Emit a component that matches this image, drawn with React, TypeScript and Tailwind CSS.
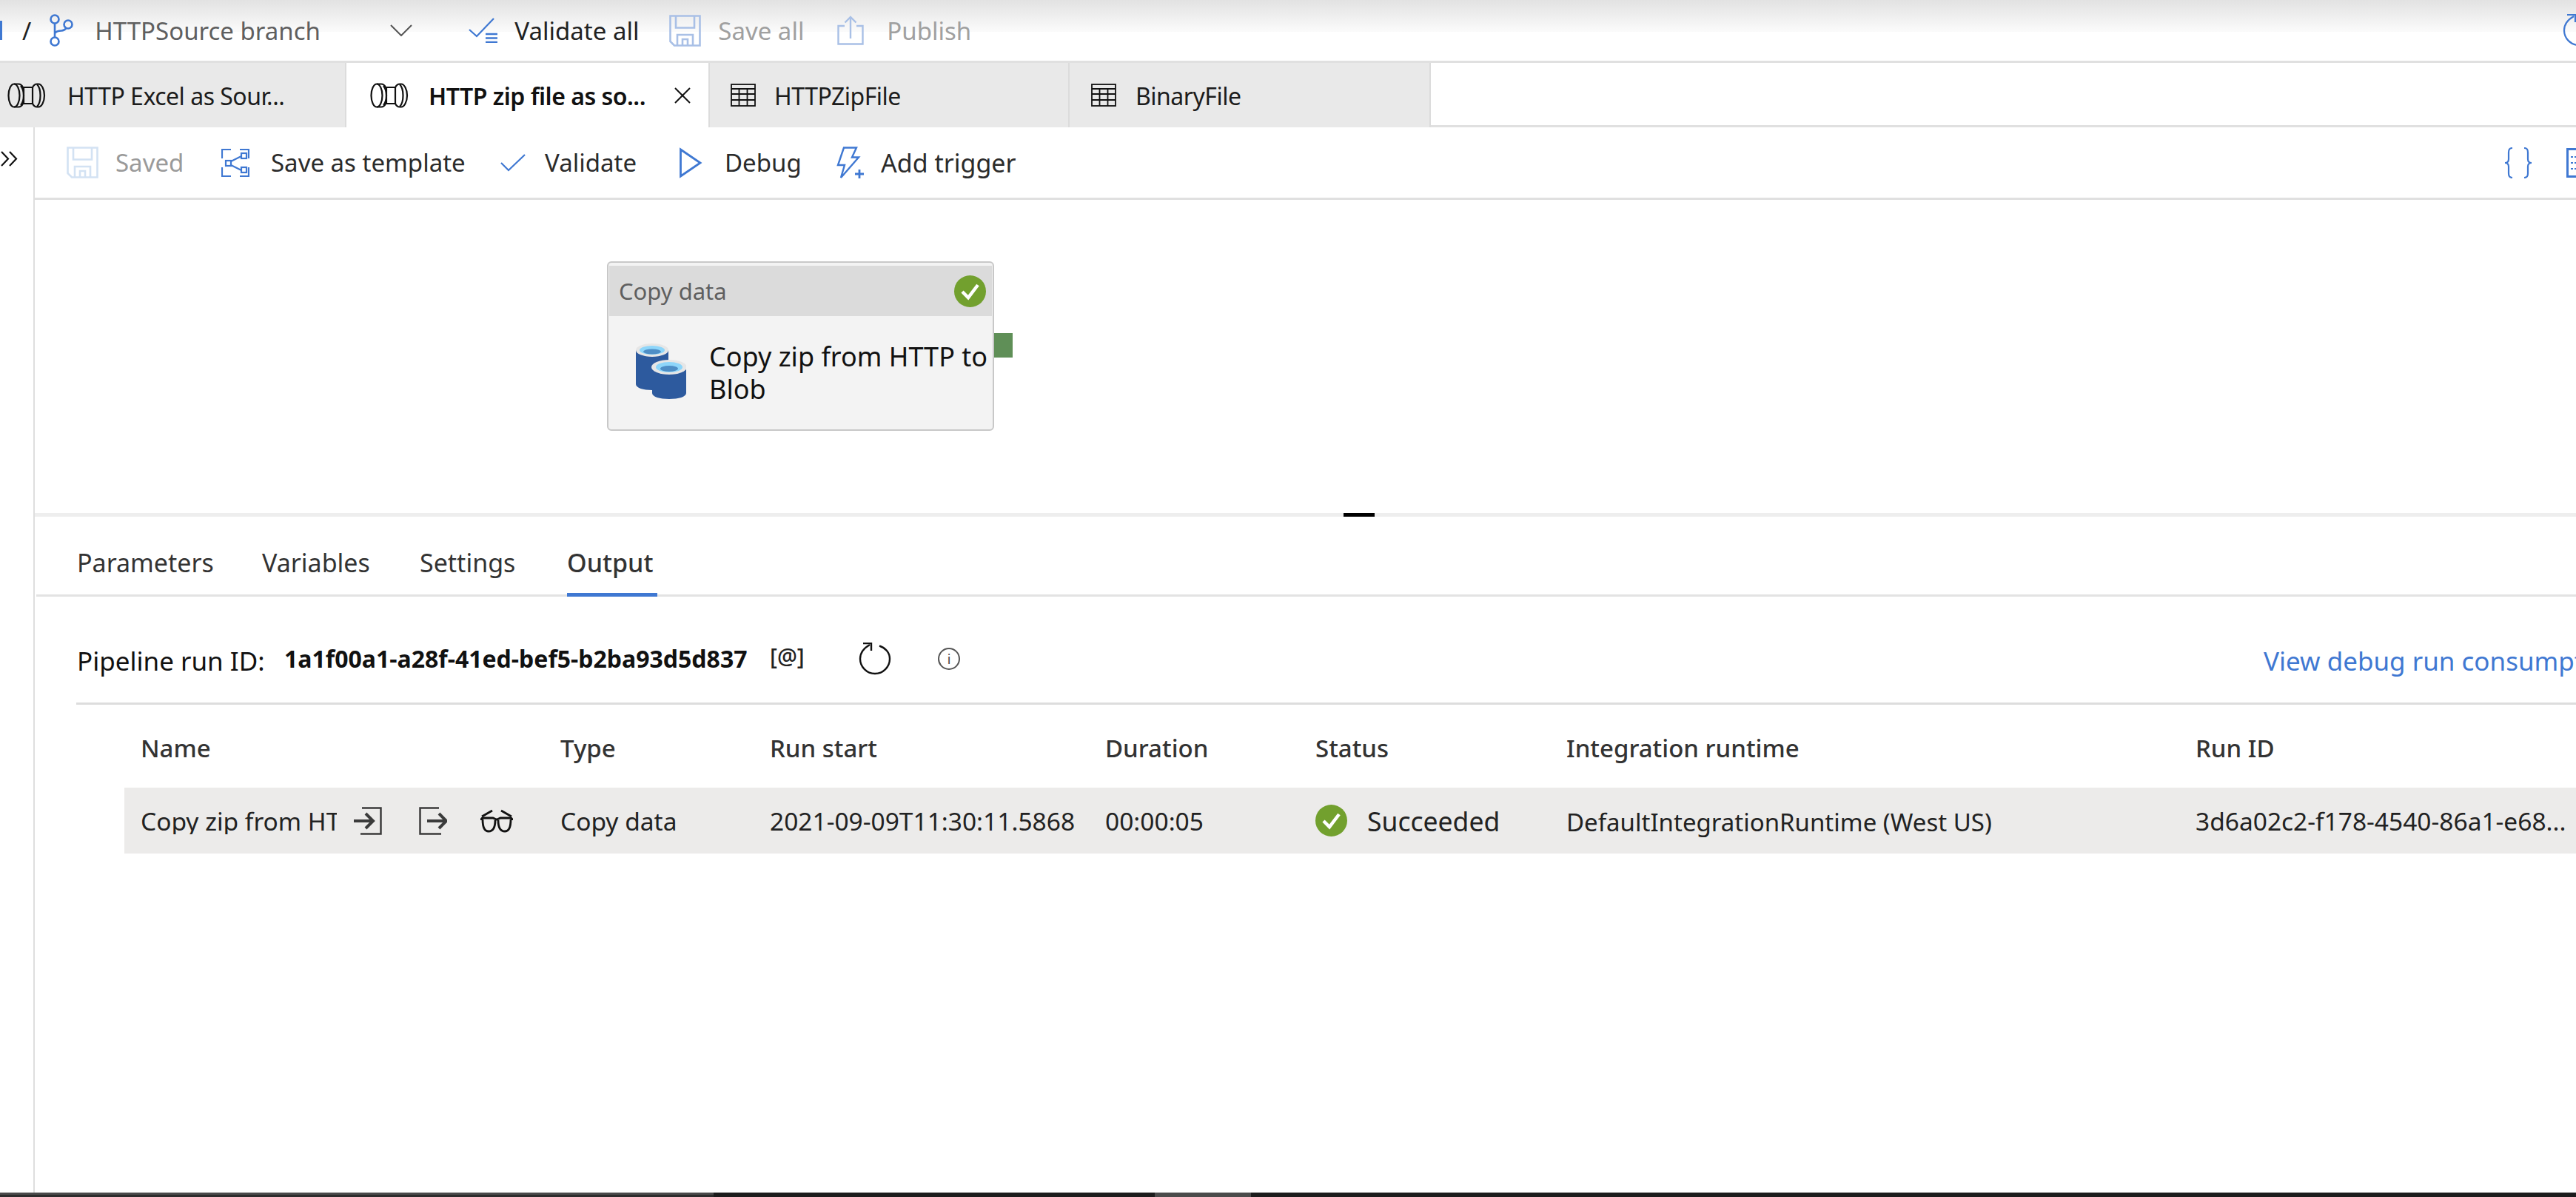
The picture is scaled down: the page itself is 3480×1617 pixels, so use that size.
import React from 'react';

const BLUE = '#3f78d2';

// --- ICONS ---
const BranchIcon = () => (
  <svg width="33" height="44" viewBox="0 0 33 44" fill="none" stroke={BLUE} strokeWidth="2.6" className="shrink-0">
    <circle cx="8" cy="7" r="5.5" /><circle cx="8" cy="37" r="5.5" /><circle cx="26" cy="14" r="5.5" />
    <path d="M8 12.5v19M8 26c2-3 5-3.500 9-3.500 3 0 5-1.500 6.500-3.500" />
  </svg>
);

const CheckListIcon = () => (
  <svg width="39" height="34" viewBox="0 0 39 34" fill="none" stroke={BLUE} className="shrink-0">
    <path d="M1 16l10 9L34 1" strokeWidth="2.2" />
    <path d="M23 22h16M23 27.500h16M23 33h16" strokeWidth="2.4" />
  </svg>
);

const SaveIcon = ({ color }: { color: string }) => (
  <svg width="43" height="43" viewBox="0 0 43 43" fill="none" stroke={color} strokeWidth="2.600" className="shrink-0">
    <path d="M1.500 1.500h40v40H7l-5.500-5.500z" />
    <path d="M9 1.500v16h25v-16M11 41.500V27h21v14.500M18 41.500V33h7v8.500" />
  </svg>
);

const PublishIcon = () => (
  <svg width="36" height="40" viewBox="0 0 36 40" fill="none" stroke="#a9c0e6" strokeWidth="2.400" className="shrink-0">
    <path d="M10 14H1.500v24.500h33V14H26M18 31V2M10.500 9.500L18 2l7.500 7.500" />
  </svg>
);

const PipelineIcon = () => (
  <svg width="52" height="34" viewBox="0 0 52 34" fill="none" stroke="#111" strokeWidth="2.200" className="shrink-0">
    <ellipse cx="9" cy="17" rx="7.500" ry="15.500" />
    <path d="M9 1.500h6c3 0 5 2.500 6 4.500h13c1-2 2.500-4.500 6-4.500h2c4 0 8 7 8 15.500s-4 15.500-8 15.500h-2c-3.500 0-5-2.500-6-4.500H21c-1 2-3 4.500-6 4.500H9" />
    <path d="M18 4c2.500 3 4 8 4 13s-1.500 10-4 13M40 2c3 3 4.500 9 4.500 15S43 29 40 32" />
    <path d="M22 6v22M34 6v22" />
  </svg>
);

const TableIcon = () => (
  <svg width="34" height="31" viewBox="0 0 34 31" fill="none" stroke="#111" strokeWidth="1.800" className="shrink-0">
    <rect x="1" y="1" width="32" height="29" />
    <path d="M1 7h32M1 14h32M1 22h32M11.500 7v23M22.500 7v23" />
  </svg>
);

const TemplateIcon = () => (
  <svg width="38" height="38" viewBox="0 0 38 38" fill="none" stroke={BLUE} strokeWidth="2.200" className="shrink-0">
    <path d="M13 1H1v12M25 1h12v12M13 37H1V25M25 37h12V25" />
    <rect x="6" y="16" width="7" height="7" /><rect x="27" y="6" width="7" height="7" /><rect x="27" y="25" width="7" height="7" />
    <path d="M13 17l14-7M13 22l14 7" />
  </svg>
);

const PlayIcon = () => (
  <svg width="31" height="42" viewBox="0 0 31 42" fill="none" stroke={BLUE} strokeWidth="2.800" className="shrink-0">
    <path d="M1.500 3v36L28 21z" />
  </svg>
);

const BoltIcon = () => (
  <svg width="38" height="44" viewBox="0 0 38 44" fill="none" stroke={BLUE} strokeWidth="2.400" className="shrink-0">
    <path d="M10 1.500h17l-6 13h9L6 42l5-17H2z" />
    <path d="M31 31v12M25 37h12" strokeWidth="2.800" />
  </svg>
);

const BracesIcon = () => (
  <svg width="38" height="42" viewBox="0 0 38 42" fill="none" stroke={BLUE} strokeWidth="2.200" className="shrink-0">
    <path d="M11 1C7 1 6 3 6 7v9c0 3-1.500 5-5 5 3.500 0 5 2 5 5v9c0 4 1 6 5 6" />
    <path d="M27 1c4 0 5 2 5 6v9c0 3 1.500 5 5 5-3.500 0-5 2-5 5v9c0 4-1 6-5 6" />
  </svg>
);

const DbIcon = () => (
  <svg width="68" height="76" viewBox="0 0 68 76" className="shrink-0">
    <path d="M0 9v46c0 5 10 8 22 8s22-3 22-8V9z" fill="#2d5a9e" />
    <ellipse cx="22" cy="9" rx="22" ry="9" fill="#e6e6e6" />
    <ellipse cx="22" cy="9" rx="17" ry="6" fill="#8ed6fa" />
    <ellipse cx="22" cy="11" rx="12" ry="3.500" fill="#4e8ec6" />
    <path d="M22 33v34c0 5 10 8 23 8s23-3 23-8V33z" fill="#2d5a9e" />
    <ellipse cx="45" cy="32" rx="24" ry="10" fill="#e6e6e6" />
    <ellipse cx="45" cy="32" rx="18" ry="7" fill="#8ed6fa" />
    <ellipse cx="45" cy="34" rx="12" ry="4" fill="#4e8ec6" />
  </svg>
);

const SuccessIcon = () => (
  <svg width="43" height="43" viewBox="0 0 43 43" className="shrink-0">
    <circle cx="21.500" cy="21.500" r="21.500" fill="#72a02e" />
    <path d="M11 22l8 8L32 13" fill="none" stroke="#fff" strokeWidth="4.500" />
  </svg>
);

const InputIcon = () => (
  <svg width="38" height="38" viewBox="0 0 38 38" fill="none" stroke="#3b3b3b" className="shrink-0">
    <path d="M11 1.500h25.500v35H9" strokeWidth="2.500" />
    <path d="M0 19h25M16 9l10 10-10 10" strokeWidth="4" />
  </svg>
);

const OutputIcon = () => (
  <svg width="38" height="38" viewBox="0 0 38 38" fill="none" stroke="#3b3b3b" className="shrink-0">
    <path d="M27 1.500H1.500v35H30" strokeWidth="2.500" />
    <path d="M11 19h25M27 9l10 10-10 10" strokeWidth="4" />
  </svg>
);

const GlassesIcon = () => (
  <svg width="44" height="34" viewBox="0 0 44 34" fill="none" stroke="#111" strokeWidth="2.800" className="shrink-0">
    <path d="M1 16c0-2 1-3 3-3h13c1 0 3 2 5 2s4-2 5-2h13c2 0 3 1 3 3" />
    <path d="M3 15c0 10 2 16 8 16s9-5 9-15M41 15c0 10-2 16-8 16s-9-5-9-15" />
    <path d="M2 11l14-8M42 11L28 3" />
  </svg>
);

const RefreshIcon = ({ color, strokeWidth }: { color: string; strokeWidth: number }) => (
  <svg width="44" height="44" viewBox="0 0 44 44" fill="none" stroke={color} strokeWidth={strokeWidth} className="shrink-0">
    <path d="M28 4.500c8 2.500 14 9 14 17.500 0 11-9 20-20 20S2 33 2 22C2 14 7 7.500 15 3" />
    <path d="M6 1h11v10" />
  </svg>
);

// --- SMALL PIECES ---
const Tab = ({ icon, label, width }: { icon: React.ReactNode; label: string; width: string }) => (
  <div className={`flex shrink-0 items-center border-r-2 border-[#dcdcdc] bg-[#e9e9e9] text-[#1c1c1c] ${width}`}>
    {icon}
    <span className="mt-[3px] whitespace-nowrap text-[32px] tracking-[-0.5px]">{label}</span>
  </div>
);

const tableHead = ['Name', 'Type', 'Run start', 'Duration', 'Status', 'Integration runtime', 'Run ID'];
const cols = 'grid grid-cols-[567px_283px_453px_284px_339px_850px_1fr] items-center';

export default function App() {
  return (
    <div className="flex h-[1617px] w-[3480px] flex-col overflow-hidden bg-white font-['Noto_Sans',sans-serif] text-[33px] leading-none text-[#2b2b2b]">
      <div className="flex min-h-0 flex-1 flex-col">
        {/* Top bar */}
        <div className="flex h-[85px] shrink-0 items-center border-b-[3px] border-[#e0e0e0] bg-[linear-gradient(#e2e2e2,#fbfbfb_43px,#fff_43px)]">
          <div className="h-[26px] w-[3px] shrink-0 bg-[#3f78d2]" />
          <span className="ml-[27px] text-[#222]">/</span>
          <div className="ml-[24px]"><BranchIcon /></div>
          <span className="ml-[29px] w-[399px] shrink-0 whitespace-nowrap text-[#5f5f5f]">HTTPSource branch</span>
          <svg width="30" height="16" viewBox="0 0 30 16" fill="none" stroke="#555" strokeWidth="2" className="shrink-0"><path d="M1 1l14 14L29 1" /></svg>
          <div className="ml-[76px]"><CheckListIcon /></div>
          <span className="ml-[23px] w-[209px] shrink-0 whitespace-nowrap text-[#222]">Validate all</span>
          <SaveIcon color="#a9c0e6" />
          <span className="ml-[23px] w-[161px] shrink-0 whitespace-nowrap text-[#a0a0a0]">Save all</span>
          <PublishIcon />
          <span className="ml-[31px] whitespace-nowrap text-[#a0a0a0]">Publish</span>
          <div className="ml-auto mr-[-26px]"><RefreshIcon color={BLUE} strokeWidth={2.2} /></div>
        </div>

        {/* Open tabs */}
        <div className="flex h-[87px] shrink-0">
          <Tab width="w-[468px] pl-[10px] gap-[29px]" icon={<PipelineIcon />} label="HTTP Excel as Sour..." />
          <div className="flex w-[489px] shrink-0 items-center bg-white pl-[32px] font-semibold text-[#111]">
            <PipelineIcon />
            <span className="ml-[27px] mt-[3px] w-[331px] shrink-0 whitespace-nowrap text-[32px] tracking-[-0.5px]">HTTP zip file as so...</span>
            <svg width="24" height="24" viewBox="0 0 24 24" fill="none" stroke="#111" strokeWidth="2" className="shrink-0"><path d="M2 2l20 20M22 2L2 22" /></svg>
          </div>
          <Tab width="w-[488px] pl-[28px] gap-[25px] border-l-2" icon={<TableIcon />} label="HTTPZipFile" />
          <Tab width="w-[488px] pl-[29px] gap-[26px]" icon={<TableIcon />} label="BinaryFile" />
          <div className="flex-1 border-b-[3px] border-[#e0e0e0]" />
        </div>

        <div className="flex min-h-0 flex-1">
          {/* Collapsed factory panel */}
          <div className="w-[47px] shrink-0 border-r-2 border-[#dedede] pl-[1px] pt-[32px]">
            <svg width="23" height="21" viewBox="0 0 23 21" fill="none" stroke="#111" strokeWidth="2.200"><path d="M1 1l9 9.500L1 20M12 1l9 9.500L12 20" /></svg>
          </div>

          <div className="flex min-w-0 flex-1 flex-col">
            {/* Pipeline toolbar */}
            <div className="flex h-[98px] shrink-0 items-center border-b-[3px] border-[#e0e0e0] pl-[43px] text-[33px]">
              <SaveIcon color="#d3e2f3" />
              <span className="ml-[23px] w-[143px] shrink-0 text-[#9a9a9a]">Saved</span>
              <TemplateIcon />
              <span className="ml-[29px] w-[310px] shrink-0 whitespace-nowrap">Save as template</span>
              <svg width="34" height="24" viewBox="0 0 34 24" fill="none" stroke={BLUE} strokeWidth="2.200" className="shrink-0"><path d="M1 12l10 10L33 1" /></svg>
              <span className="ml-[26px] w-[182px] shrink-0">Validate</span>
              <PlayIcon />
              <span className="ml-[30px] w-[151px] shrink-0">Debug</span>
              <BoltIcon />
              <span className="ml-[22px] whitespace-nowrap text-[34px]">Add trigger</span>
              <div className="ml-auto"><BracesIcon /></div>
              <svg width="30" height="40" viewBox="0 0 30 40" fill="none" stroke={BLUE} strokeWidth="3" className="ml-[46px] mr-[-17px] shrink-0"><path d="M30 1.500H1.500v37H30" /><path d="M6 12h10M6 20h10M6 28h10" strokeWidth="2" strokeDasharray="3 2" /></svg>
            </div>

            {/* Canvas */}
            <div className="relative h-[423px] shrink-0">
              <div className="absolute left-[773px] top-[83px] flex h-[229px] w-[523px] flex-col rounded-[6px] border-2 border-[#c8c8c8] bg-[#f3f3f3] px-[1px] pt-[4px]">
                <div className="flex h-[68px] shrink-0 items-center justify-between bg-[#dbdbdb] pl-[13px] pr-[8px] text-[31px] text-[#5f5f5f]">
                  <span>Copy data</span>
                  <SuccessIcon />
                </div>
                <div className="flex pl-[36px] pt-[37px]">
                  <DbIcon />
                  <span className="-mt-[4px] ml-[31px] text-[36px] leading-[44px] text-[#111]">Copy zip from HTTP to<br />Blob</span>
                </div>
              </div>
              <div className="absolute left-[1296px] top-[180px] h-[33px] w-[25px] bg-[#5f8f57]" />
            </div>

            {/* Splitter */}
            <div className="flex h-[5px] shrink-0 bg-[#eeeeee] pl-[1768px]">
              <div className="h-full w-[42px] bg-black" />
            </div>

            {/* Detail tabs */}
            <div className="ml-[2px] flex h-[108px] shrink-0 items-end border-b-[3px] border-[#e3e3e3] pl-[55px] text-[34px] text-[#333]">
              <div className="-mb-[3px] h-[80px] w-[250px] shrink-0 pt-[17px]">Parameters</div>
              <div className="-mb-[3px] h-[80px] w-[213px] shrink-0 pt-[17px]">Variables</div>
              <div className="-mb-[3px] h-[80px] w-[199px] shrink-0 pt-[17px]">Settings</div>
              <div className="-mb-[3px] h-[80px] w-[122px] shrink-0 border-b-[5px] border-[#3f78d2] pt-[17px] font-medium">Output</div>
            </div>

            {/* Pipeline run row */}
            <div className="flex h-[143px] shrink-0 items-center pl-[57px] pt-[25px]">
              <span className="mt-[5px] w-[280px] shrink-0 whitespace-nowrap text-[35px] text-[#111]">Pipeline run ID:</span>
              <span className="w-[656px] shrink-0 whitespace-nowrap text-[32px] font-bold text-[#111]">1a1f00a1-a28f-41ed-bef5-b2ba93d5d837</span>
              <span className="mb-[6px] w-[120px] shrink-0 text-[30px] font-medium text-[#222]">[@]</span>
              <RefreshIcon color="#111" strokeWidth={2.4} />
              <div className="ml-[63px] flex h-[30px] w-[30px] shrink-0 items-center justify-center rounded-full border-2 border-[#555] text-[18px] text-[#444]">i</div>
              <span className="ml-[1761px] mt-[4px] shrink-0 whitespace-nowrap text-[35px] text-[#3f78d2]">View debug run consumption</span>
            </div>

            {/* Activity runs table */}
            <div className="ml-[56px] border-t-[3px] border-[#dddddd]" />
            <div className={`${cols} ml-[121px] h-[112px] shrink-0 pl-[22px] pt-[4px] font-medium text-[#333]`}>
              {tableHead.map(h => <span key={h} className="whitespace-nowrap">{h}</span>)}
            </div>
            <div className={`${cols} ml-[121px] h-[89px] shrink-0 bg-[#ecebea] pl-[22px] text-[33.5px] text-[#222]`}>
              <div className="flex items-center">
                <span className="mt-[3px] w-[265px] shrink-0 overflow-hidden whitespace-nowrap">Copy zip from HTTP to Blob</span>
                <div className="ml-[23px]"><InputIcon /></div>
                <div className="ml-[50px]"><OutputIcon /></div>
                <div className="ml-[45px]"><GlassesIcon /></div>
              </div>
              <span className="mt-[3px]">Copy data</span>
              <span className="mt-[3px] whitespace-nowrap">2021-09-09T11:30:11.5868</span>
              <span className="mt-[3px]">00:00:05</span>
              <div className="flex items-center gap-[27px]"><SuccessIcon /><span className="mt-[3px] text-[35.5px]">Succeeded</span></div>
              <span className="mt-[3px] whitespace-nowrap text-[33px]">DefaultIntegrationRuntime (West US)</span>
              <span className="mt-[3px] whitespace-nowrap">3d6a02c2-f178-4540-86a1-e68...</span>
            </div>
          </div>
        </div>
      </div>

      {/* Strip of the next window along the bottom edge */}
      <div className="flex h-[6px] shrink-0 bg-[#1c1c1c]">
        <div className="w-[964px] shrink-0 bg-[linear-gradient(#4a4a4a_50%,#2c2c2c_50%)]" />
        <div className="ml-[596px] w-[130px] shrink-0 bg-[#4b4b4b]" />
      </div>
    </div>
  );
}
